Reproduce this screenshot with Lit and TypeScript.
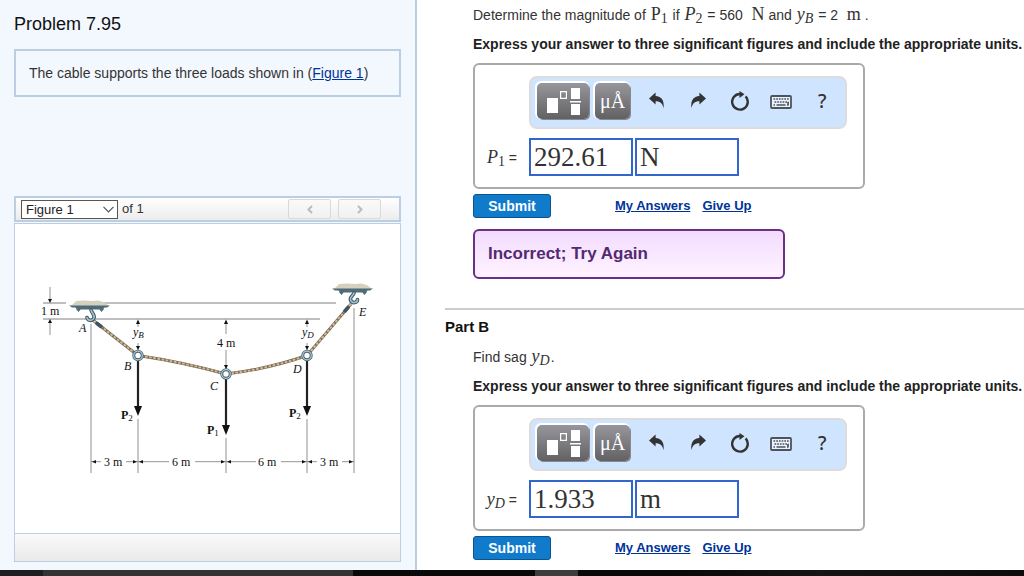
import { LitElement, html, svg, css, nothing } from "lit";
import type { TemplateResult } from "lit";
import { customElement, property } from "lit/decorators.js";

const undoArrow = "M0 6.5 L6.6 0.6 V4 C11.5 4.2 15.6 7.4 14.6 16.2 C13.6 11.6 11.4 9.2 6.6 9.2 V12.6 Z";

@customElement("cable-figure")
export class CableFigure extends LitElement {
  static styles = css`
    :host { display: block; }
    svg { display: block; width: 100%; height: auto; }
    text { font: 12px "Liberation Serif", serif; fill: #111; }
    .it { font-style: italic; }
    .bold { font-weight: bold; }
    .sub { font-size: 9px; font-weight: normal; }
    .guide { stroke: #aaa; stroke-width: 1.3; fill: none; }
    .dim { stroke: #777; stroke-width: 0.8; fill: none; }
    .load { stroke: #222; stroke-width: 2.2; }
    .head { fill: #111; }
    .rope { fill: none; stroke: #7d6c58; stroke-width: 3; }
    .strand { fill: none; stroke: #d3bd98; stroke-width: 1.8; stroke-dasharray: 2.6 1.6; }
    .ring { fill: #fff; stroke: #48606c; stroke-width: 3; }
    .shine { fill: none; stroke: #a9cbd9; stroke-width: 1.2; }
    .slab { fill: #d4d1bf; }
    .plate { fill: #4f6b78; }
    .hook { fill: none; stroke: #3f5560; stroke-width: 3.6; stroke-linecap: round; }
    .hook-shine { fill: none; stroke: #9fc4d3; stroke-width: 1.6; stroke-linecap: round; }
  `;

  private hanger(x: number, y: number) {
    return svg`<g transform="translate(${x} ${y})">
      <path class="slab" d="M-19 -1 L-14 -6 L-6 -6.500 L2 -6 L8 -6.500 L14 -5 L19 -1 Z"></path>
      <path class="plate" d="M-21 -1.500 H20 L17 0.500 H-18 Z M-15 0 H15 L13 2.500 H-13 Z M-14 2 H-9 L-11.500 5 Z M9 2 H14 L11.500 5 Z"></path>
    </g>`;
  }

  private hook(d: string) {
    return svg`<path class="hook" d=${d}></path><path class="hook-shine" d=${d}></path>`;
  }

  private force(x: number, from: number, tip: number) {
    return svg`<line class="load" x1=${x} x2=${x} y1=${from} y2=${tip - 8}></line>
      <path class="head" d="M${x - 4} ${tip - 10} H${x + 4} L${x} ${tip} Z"></path>
      <line class="guide" x1=${x} x2=${x} y1=${tip + 3} y2="473"></line>`;
  }

  private sag(x: number, gapTop: number, gapEnd: number, end: number) {
    return svg`<path class="dim" d="M${x} 321 V${gapTop} M${x} ${gapEnd} V${end}"></path>
      <path class="head" d="M${x - 2} 324 H${x + 2} L${x} 319.500 Z M${x - 2} ${end - 4} H${x + 2} L${x} ${end} Z"></path>`;
  }

  private span(a: number, b: number, textFrom: number, textTo: number) {
    return svg`<path class="dim" d="M${a} 461.700 H${textFrom} M${textTo} 461.700 H${b}"></path>
      <path class="head" d="M${a + 1} 461.700 l4 -1.700 v3.400 Z M${b - 1} 461.700 l-4 -1.700 v3.400 Z"></path>`;
  }

  render() {
    const cable = "M94 321 L138 355.500 Q182 362 226 374 Q268 369 307 355.500 L351 304";
    return html`<svg viewBox="15 224 385 309" role="img" aria-label="Cable A B C D E with three loads">
      <path class="guide" d="M43 303 H66 M98 303 H336 M43 319 H86 M95 319 H320"></path>
      <path class="dim" d="M50 287 V300 M50 322 V335"></path>
      <path class="head" d="M48 299 H52 L50 303 Z M48 323 H52 L50 319 Z"></path>
      <path class="guide" d="M91 324 V473 M354 308 V473"></path>
      ${this.sag(138, 327, 343, 350)}
      ${this.sag(226, 334, 350, 369)}
      ${this.sag(307, 327, 343, 350)}
      ${this.force(138, 360, 416)}
      ${this.force(226, 379, 435)}
      ${this.force(307, 360, 416)}
      ${this.span(91, 138, 101, 126)}
      ${this.span(138, 226, 169, 195)}
      ${this.span(226, 307, 256, 281)}
      ${this.span(307, 354, 317, 342)}
      ${this.hanger(90, 307)}
      ${this.hanger(353, 290)}
      <path class="rope" d=${cable}></path>
      <path class="strand" d=${cable}></path>
      ${this.hook("M91 310 C92 313 95 315 94 318 C92.500 321.500 88 321 87 317.500")}
      ${this.hook("M354 293 C353 296 349.500 297 350.500 300 C352 304 357.500 303 357.500 299.500")}
      <path class="hook" d="M97 323.500 L101 326.500 M348 307.500 L345 311"></path>
      ${[[138, 355.5], [226, 374], [307, 355.5]].map(([x, y]) => svg`
        <circle class="ring" cx=${x} cy=${y} r="4.200"></circle>
        <circle class="shine" cx=${x} cy=${y} r="4.300"></circle>`)}
      <text x="41" y="315">1 m</text>
      <text x="217" y="347">4 m</text>
      <text x="104" y="466">3 m</text>
      <text x="172" y="466">6 m</text>
      <text x="258" y="466">6 m</text>
      <text x="320" y="466">3 m</text>
      <text class="it" x="79" y="332">A</text>
      <text class="it" x="124" y="370">B</text>
      <text class="it" x="210" y="390">C</text>
      <text class="it" x="293" y="373">D</text>
      <text class="it" x="359" y="316">E</text>
      <text class="it" x="133" y="336">y<tspan class="sub" dy="2">B</tspan></text>
      <text class="it" x="302" y="336">y<tspan class="sub" dy="2">D</tspan></text>
      <text class="bold" x="121" y="419">P<tspan class="sub" dy="2">2</tspan></text>
      <text class="bold" x="207" y="434">P<tspan class="sub" dy="2">1</tspan></text>
      <text class="bold" x="289" y="417">P<tspan class="sub" dy="2">2</tspan></text>
    </svg>`;
  }
}

@customElement("answer-form")
export class AnswerForm extends LitElement {
  @property() symbol = "";
  @property() index = "";
  @property() value = "";
  @property() unit = "";
  @property() feedback = "";

  static styles = css`
    :host { display: block; }
    .box {
      box-sizing: border-box;
      width: 392px;
      max-width: 100%;
      border: 2px solid #aaa;
      border-radius: 6px;
      padding: 11px 16px 11px 0;
      display: grid;
      grid-template-columns: 54px 1fr;
      row-gap: 9px;
    }
    .toolbar {
      grid-column: 2;
      display: flex;
      align-items: center;
      gap: 6px;
      padding: 5px 2px 8px 6px;
      border: 2px solid #dcdcdc;
      border-radius: 8px;
      background: #cfe5ff;
    }
    button { font: inherit; margin: 0; padding: 0; cursor: pointer; }
    .key {
      display: grid;
      place-items: center;
      height: 36px;
      border: 0;
      border-radius: 5px;
      background: linear-gradient(#96969c, #626264);
      box-shadow: -1px -1px 0 1px #fff, 1px 1px 0 #8a8a8e;
      box-sizing: border-box;
      color: #fff;
    }
    .wide { width: 52px; }
    .narrow { width: 35px; font: 20px/34px "Liberation Serif", serif; }
    .icons { flex: 1; display: flex; }
    .icon {
      flex: 1;
      display: grid;
      place-items: center;
      height: 36px;
      border: 0;
      background: none;
      color: #333;
    }
    .help { font: 500 19px/36px "Noto Sans", sans-serif; }
    svg { display: block; }
    label {
      align-self: center;
      justify-self: end;
      padding-right: 12px;
      font: 14px/20px "Liberation Sans", sans-serif;
      color: #333;
    }
    i { font: italic 18px/20px "Liberation Serif", serif; }
    .sub { font: 14px/1 "Liberation Serif", serif; position: relative; top: 3px; }
    .sub.it { font-style: italic; }
    .fields { display: flex; gap: 2px; }
    input {
      box-sizing: border-box;
      width: 104px;
      height: 38px;
      margin: 0;
      padding: 0 3px;
      border: 2px solid #3366cc;
      border-radius: 0;
      background: #fff;
      color: #333;
      font: 27px/34px "Liberation Serif", serif;
    }
    .actions { display: flex; align-items: center; margin-top: 5px; font: bold 13px/24px "Liberation Sans", sans-serif; }
    .submit {
      box-sizing: border-box;
      width: 78px;
      height: 24px;
      margin-right: 64px;
      border: 1px solid #0a548f;
      border-radius: 3px;
      background: #107acb;
      color: #fff;
      font: bold 14px/20px "Liberation Sans", sans-serif;
    }
    a { color: #003399; margin-right: 12px; }
    .feedback {
      box-sizing: border-box;
      width: 312px;
      max-width: 100%;
      margin: 11px 0 0;
      padding: 13px;
      border: 2px solid #6b2f86;
      border-radius: 6px;
      background: linear-gradient(#f2dcff, #fff2ff);
      color: #53296f;
      font: bold 17px/20px "Liberation Sans", sans-serif;
    }
  `;

  render(): TemplateResult {
    const numeric = /\d/.test(this.index);
    return html`
      <div class="box">
        <div class="toolbar">
          <button class="key wide" aria-label="Templates">
            <svg width="35" height="30" viewBox="0 0 35 30">
              <path fill="#fff" d="M1 12 H12 V27 H1 Z M25 2 H34 V13 H25 Z M25 18 H34 V29 H25 Z M24 15 H35 V16.500 H24 Z"></path>
              <path fill="none" stroke="#fff" stroke-width="1.200" d="M14.600 5.600 H20.400 V12.400 H14.600 Z"></path>
            </svg>
          </button>
          <button class="key narrow" aria-label="Symbols">μÅ</button>
          <div class="icons">
            <button class="icon" aria-label="Undo">
              <svg width="16" height="19" viewBox="0 0 16 19"><path fill="currentColor" d=${undoArrow}></path></svg>
            </button>
            <button class="icon" aria-label="Redo">
              <svg width="16" height="19" viewBox="0 0 16 19"><path fill="currentColor" transform="translate(16 0) scale(-1 1)" d=${undoArrow}></path></svg>
            </button>
            <button class="icon" aria-label="Reset">
              <svg width="18" height="21" viewBox="0 0 18 21">
                <path fill="none" stroke="currentColor" stroke-width="2.400" d="M14.600 5.400 A7.800 7.800 0 1 1 9 3"></path>
                <path fill="currentColor" d="M8.500 0 L13.500 3.200 L8.500 7 Z"></path>
              </svg>
            </button>
            <button class="icon" aria-label="Keyboard">
              <svg width="22" height="17" viewBox="0 0 22 17">
                <rect x="1" y="3" width="20" height="12" rx="1" fill="#e9f2fc" stroke="#4d535b" stroke-width="1.800"></rect>
                <path stroke="#4d535b" stroke-width="1.700" stroke-dasharray="1.700 1" d="M3.500 6 H19 M4.500 9 H18.500"></path>
                <path stroke="#4d535b" stroke-width="1.700" d="M3.500 12 H5 M6.500 12 H15.500 M17 12 H18.600 M18 9 V12"></path>
              </svg>
            </button>
            <button class="icon help" aria-label="Help">?</button>
          </div>
        </div>
        <label for="value"><i>${this.symbol}</i><span class="sub ${numeric ? "" : "it"}">${this.index}</span> =</label>
        <div class="fields">
          <input id="value" .value=${this.value}>
          <input aria-label="Units" .value=${this.unit}>
        </div>
      </div>
      <div class="actions">
        <button class="submit">Submit</button>
        <a href="#answers">My Answers</a>
        <a href="#give-up">Give Up</a>
      </div>
      ${this.feedback ? html`<p class="feedback" role="status">${this.feedback}</p>` : nothing}
    `;
  }
}

@customElement("app-root")
export class AppRoot extends LitElement {
  static styles = css`
    :host {
      display: flex;
      flex-direction: column;
      height: 100vh;
      overflow: hidden;
      background: #fff;
      color: #333;
      font: 14px/20px "Liberation Sans", Arial, sans-serif;
    }
    .page { flex: 1; min-height: 0; display: grid; grid-template-columns: 417px 1fr; }
    .side {
      padding: 14px 14px 0;
      background: #f3f8ff;
      border-right: 2px solid #b9cee2;
    }
    h1 { margin: 0 0 15px; font: 18px/20px "Liberation Sans", sans-serif; color: #111; }
    .statement { margin: 0 0 99px; padding: 12px 13px; border: 2px solid #bccfe2; line-height: 20px; }
    a { color: #003399; }
    .viewer-bar {
      display: flex;
      align-items: center;
      height: 22px;
      padding: 0 18px 0 5px;
      border: 2px solid #bccfe2;
      background: linear-gradient(#fff, #ececec);
      font-size: 13px;
      line-height: 18px;
    }
    .picker { display: grid; align-items: center; width: 97px; margin-right: 4px; }
    .picker > * { grid-area: 1 / 1; }
    select {
      appearance: none;
      box-sizing: border-box;
      width: 100%;
      height: 19px;
      margin: 0;
      padding: 0 4px;
      border: 1px solid #555;
      border-radius: 0;
      background: #fff;
      color: #222;
      font: 13px/17px "Liberation Sans", sans-serif;
    }
    .chevron { justify-self: end; margin-right: 4px; pointer-events: none; }
    .nav { display: flex; gap: 7px; margin-left: auto; }
    .nav button {
      display: grid;
      place-items: center;
      width: 43px;
      height: 20px;
      padding: 0;
      border: 1px solid #d9d9d9;
      border-radius: 2px;
      background: linear-gradient(#fafafa, #f1f1f1);
    }
    .figure { margin-top: 1px; border: 1px solid #bccfe2; background: #fff; }
    .figure-foot { height: 27px; border-top: 1px solid #bccfe2; background: linear-gradient(#fafafa, #eaeaea); }
    .work { min-width: 0; padding: 4px 0 0 28px; }
    .part { padding-left: 28px; }
    p { margin: 0; white-space: nowrap; }
    .ask { height: 20px; margin-bottom: 10px; }
    .format { margin-bottom: 9px; font-weight: bold; color: #222; }
    .m { margin-left: 1px; font: 18px/20px "Liberation Serif", serif; }
    .sub { margin-right: 1px; font: 14px/1 "Liberation Serif", serif; position: relative; top: 3px; }
    .it { font-style: italic; }
    hr { height: 2px; margin: 29px 0 7px; border: 0; background: #ccc; }
    h2 { margin: 0 0 9px; font: bold 15px/20px "Liberation Sans", sans-serif; color: #111; }
    .strip {
      height: 6px;
      background: linear-gradient(to right, #1d1e21 0 4.2%, #333 4.2% 34.500%, #080808 34.500% 52.200%, #3d3d3d 52.200% 56.400%, #080808 56.400% 66%, #161413 80%, #0c0c0c);
    }
  `;

  private chevron(d: string) {
    return html`<svg width="8" height="9" viewBox="0 0 8 9"><path d=${d} fill="none" stroke="#bbb" stroke-width="2"></path></svg>`;
  }

  render() {
    const format = html`<p class="format">Express your answer to three significant figures and include the appropriate units.</p>`;
    return html`
      <main class="page">
        <section class="side">
          <h1>Problem 7.95</h1>
          <p class="statement">The cable supports the three loads shown in (<a href="#figure">Figure 1</a>)</p>
          <div class="viewer-bar">
            <div class="picker">
              <select aria-label="Figure"><option>Figure 1</option></select>
              <svg class="chevron" width="11" height="7" viewBox="0 0 11 7"><path d="M0.500 0.800 L5.500 5.800 L10.500 0.800" fill="none" stroke="#555" stroke-width="1.200"></path></svg>
            </div>
            <span>of 1</span>
            <div class="nav">
              <button aria-label="Previous figure">${this.chevron("M6 1 L2.500 4.500 L6 8")}</button>
              <button aria-label="Next figure">${this.chevron("M2 1 L5.500 4.500 L2 8")}</button>
            </div>
          </div>
          <div class="figure" id="figure">
            <cable-figure></cable-figure>
            <div class="figure-foot"></div>
          </div>
        </section>
        <section class="work">
          <div class="part">
            <p class="ask">Determine the magnitude of <span class="m">P</span><span class="sub">1</span> if <span class="m it">P</span><span class="sub">2</span> = 560 &nbsp;<span class="m">N</span> and <span class="m it">y</span><span class="sub it">B</span> = 2 &nbsp;<span class="m">m</span> .</p>
            ${format}
            <answer-form symbol="P" index="1" value="292.61" unit="N" feedback="Incorrect; Try Again"></answer-form>
          </div>
          <hr>
          <h2>Part B</h2>
          <div class="part">
            <p class="ask">Find sag <span class="m it">y</span><span class="sub it">D</span>.</p>
            ${format}
            <answer-form symbol="y" index="D" value="1.933" unit="m"></answer-form>
          </div>
        </section>
      </main>
      <footer class="strip"></footer>
    `;
  }
}
